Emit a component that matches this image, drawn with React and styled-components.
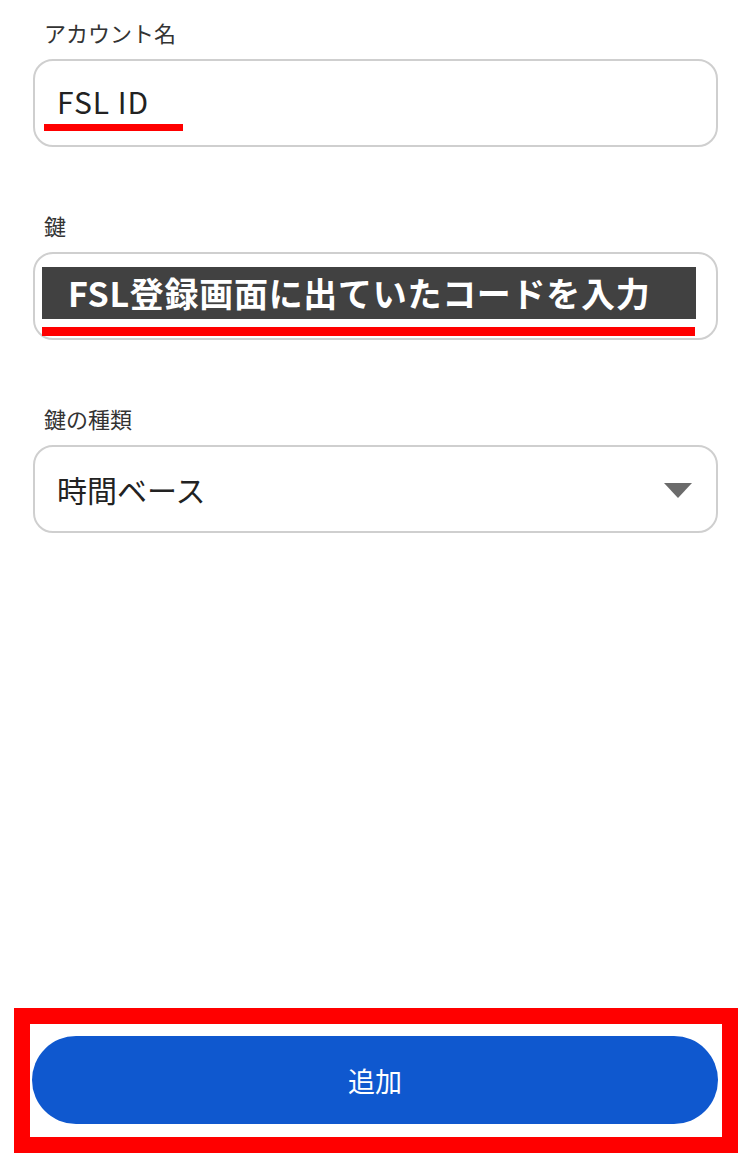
import React from "react";
import styled, { createGlobalStyle } from "styled-components";

const Global = createGlobalStyle`
  html, body { margin: 0; padding: 0; background: #ffffff; }
  body { font-family: "Noto Sans CJK JP", "Noto Sans", sans-serif; }
`;

const Page = styled.div`
  width: 750px;
  height: 1174px;
  box-sizing: border-box;
  display: flex;
  flex-direction: column;
  padding: 17px 0 0;
  overflow: hidden;
`;

const Form = styled.div`
  display: flex;
  flex-direction: column;
  gap: 63px;
  padding: 0 32px 0 33px;
`;

const Field = styled.div`
  display: flex;
  flex-direction: column;
  gap: 12px;
`;

const Label = styled.div`
  font-size: 22px;
  line-height: 30px;
  color: #333333;
  padding-left: 11px;
`;

const Box = styled.div`
  height: 88px;
  box-sizing: border-box;
  border: 2px solid #cfcfcf;
  border-radius: 20px;
  display: flex;
  flex-direction: ${(p) => (p.$column ? "column" : "row")};
  align-items: ${(p) => (p.$column ? "stretch" : "center")};
  padding: ${(p) => p.$pad || "0 24px 0 22px"};
  background: #fff;
`;

const ValueWrap = styled.div`
  display: flex;
  flex-direction: column;
  align-items: flex-start;
  padding-top: 21px;
  height: 100%;
  box-sizing: border-box;
`;

const Value = styled.div`
  font-family: "Noto Sans CJK JP", sans-serif;
  font-size: 30px;
  line-height: 38px;
  color: #222;
  letter-spacing: ${(p) => p.$ls || 0}px;
  padding-left: ${(p) => p.$indent || 0}px;
`;

const Underline = styled.div`
  width: ${(p) => p.$w}px;
  height: ${(p) => p.$h || 7}px;
  background: #ff0000;
  margin-top: ${(p) => p.$mt || 0}px;
`;

const Banner = styled.div`
  height: 52px;
  background: #414141;
  color: #ffffff;
  font-weight: 700;
  font-size: 34px;
  letter-spacing: 0.7px;
  line-height: 52px;
  padding-left: 26px;
  white-space: nowrap;
  overflow: hidden;
`;

const SelectRow = styled.div`
  flex: 1;
  display: flex;
  align-items: center;
  justify-content: space-between;
`;

const Caret = styled.div`
  width: 0;
  height: 0;
  border-left: 14px solid transparent;
  border-right: 14px solid transparent;
  border-top: 15px solid #6b6b6b;
  margin-top: 2px;
`;

const Footer = styled.div`
  margin-top: auto;
  margin-bottom: 21px;
  margin-left: 14px;
  margin-right: 12px;
  border: 16px solid #ff0000;
  padding: 12px 4px 13px 2px;
`;

const AddButton = styled.button`
  width: 100%;
  height: 88px;
  border: none;
  border-radius: 44px;
  background: #0f58cf;
  color: #ffffff;
  font-family: "Noto Sans CJK JP", sans-serif;
  font-size: 27px;
  display: flex;
  align-items: center;
  justify-content: center;
  padding: 0;
`;

export default function App() {
  return (
    <Page>
      <Global />
      <Form>
        <Field>
          <Label>アカウント名</Label>
          <Box $pad="0 20px 0 9px">
            <ValueWrap>
              <Value $indent={13} $ls={1}>FSL ID</Value>
              <Underline $w={139} $mt={4} />
            </ValueWrap>
          </Box>
        </Field>
        <Field>
          <Label>鍵</Label>
          <Box $column $pad="13px 20px 0 7px">
            <Banner>FSL登録画面に出ていたコードを入力</Banner>
            <Underline $w={653} $h={9} $mt={8} />
          </Box>
        </Field>
        <Field>
          <Label>鍵の種類</Label>
          <Box>
            <SelectRow>
              <Value>時間ベース</Value>
              <Caret />
            </SelectRow>
          </Box>
        </Field>
      </Form>
      <Footer>
        <AddButton>追加</AddButton>
      </Footer>
    </Page>
  );
}
